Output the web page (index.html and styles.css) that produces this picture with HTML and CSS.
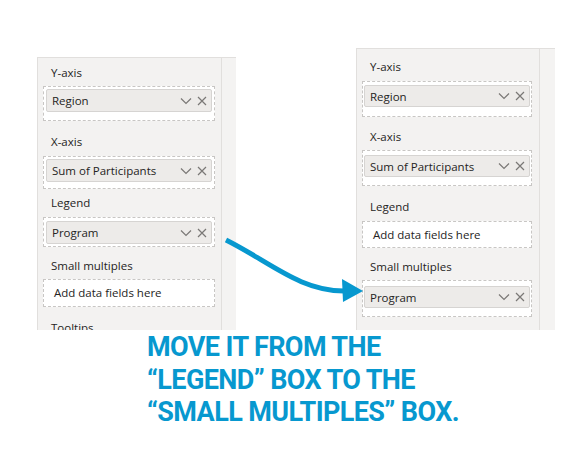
FILE: index.html
```html
<!DOCTYPE html>
<html>
	<head>
		<title>Move a field to Small multiples</title>
		<link rel="stylesheet" href="styles.css">
	</head>
	<body>
		<div class="stage">
			<div class="panes">
				<!-- before: Program sits in Legend -->
				<section class="pane pane-before">
					<div class="fields">
						<div class="label">Y-axis</div>
						<div class="well well-y">
							<div class="pill">
								<span class="pill-name">Region</span>
								<svg class="chev" width="12" height="8" viewBox="0 0 12 8"><path d="M1 1.5L6 6.5L11 1.5"/></svg>
								<svg class="cross" width="10" height="10" viewBox="0 0 10 10"><path d="M1 1L9 9M9 1L1 9"/></svg>
							</div>
						</div>
						<div class="label label-x">X-axis</div>
						<div class="well well-x">
							<div class="pill">
								<span class="pill-name">Sum of Participants</span>
								<svg class="chev" width="12" height="8" viewBox="0 0 12 8"><path d="M1 1.5L6 6.5L11 1.5"/></svg>
								<svg class="cross" width="10" height="10" viewBox="0 0 10 10"><path d="M1 1L9 9M9 1L1 9"/></svg>
							</div>
						</div>
						<div class="label label-legend">Legend</div>
						<div class="well well-legend">
							<div class="pill">
								<span class="pill-name">Program</span>
								<svg class="chev" width="12" height="8" viewBox="0 0 12 8"><path d="M1 1.5L6 6.5L11 1.5"/></svg>
								<svg class="cross" width="10" height="10" viewBox="0 0 10 10"><path d="M1 1L9 9M9 1L1 9"/></svg>
							</div>
						</div>
						<div class="label label-small">Small multiples</div>
						<div class="well well-empty">Add data fields here</div>
						<div class="label label-tips">Tooltips</div>
					</div>
					<div class="track"></div>
				</section>

				<!-- after: Program moved to Small multiples -->
				<section class="pane pane-after">
					<div class="fields">
						<div class="label">Y-axis</div>
						<div class="well well-y">
							<div class="pill">
								<span class="pill-name">Region</span>
								<svg class="chev" width="12" height="8" viewBox="0 0 12 8"><path d="M1 1.5L6 6.5L11 1.5"/></svg>
								<svg class="cross" width="10" height="10" viewBox="0 0 10 10"><path d="M1 1L9 9M9 1L1 9"/></svg>
							</div>
						</div>
						<div class="label label-x">X-axis</div>
						<div class="well well-x">
							<div class="pill">
								<span class="pill-name">Sum of Participants</span>
								<svg class="chev" width="12" height="8" viewBox="0 0 12 8"><path d="M1 1.5L6 6.5L11 1.5"/></svg>
								<svg class="cross" width="10" height="10" viewBox="0 0 10 10"><path d="M1 1L9 9M9 1L1 9"/></svg>
							</div>
						</div>
						<div class="label label-legend">Legend</div>
						<div class="well well-empty">Add data fields here</div>
						<div class="label label-small">Small multiples</div>
						<div class="well well-small">
							<div class="pill">
								<span class="pill-name">Program</span>
								<svg class="chev" width="12" height="8" viewBox="0 0 12 8"><path d="M1 1.5L6 6.5L11 1.5"/></svg>
								<svg class="cross" width="10" height="10" viewBox="0 0 10 10"><path d="M1 1L9 9M9 1L1 9"/></svg>
							</div>
						</div>
					</div>
					<div class="track"></div>
				</section>
			</div>

			<p class="note">MOVE IT FROM THE<br>“LEGEND” BOX TO THE<br>“SMALL MULTIPLES” BOX.</p>

			<svg class="arrow" width="588" height="455" viewBox="0 0 588 455">
				<path d="M226 240C270 262 300 291 344 291" fill="none" stroke="#0798cf" stroke-width="5"/>
				<polygon points="342,279 363,291 343,302" fill="#0798cf"/>
			</svg>
		</div>
	</body>
</html>
```

FILE: styles.css
```css
body{
	margin: 0;
	background: #fff;
}
.stage{
	position: relative;
	width: 588px;
	height: 455px;
	overflow: hidden;
	font-family: "Open Sans", "Noto Sans", sans-serif;
	color: #252423;
}
.panes{
	display: flex;
	align-items: flex-end;
	gap: 120px;
	padding: 48px 0 0 37px;
}
.pane{
	display: flex;
	box-sizing: border-box;
	width: 199px;
	border-top: 1px solid #e1dfdd;
	border-left: 1px solid #e1dfdd;
	background: #f3f2f1;
	overflow: hidden;
}
.pane-before{
	height: 273px;
}
.pane-after{
	height: 282px;
}
.fields{
	box-sizing: border-box;
	border-right: 1px solid #e1dfdd;
}
.pane-before .fields{
	width: 184px;
	padding: 7px 6px 0 5px;
}
.pane-after .fields{
	width: 183px;
	padding: 10px 7px 0 5px;
}
.track{
	flex: 1;
	background: #f4f3f2;
}

.label{
	height: 16px;
	line-height: 16px;
	padding-left: 8px;
	font-size: 11.5px;
	margin-bottom: 5px;
	white-space: nowrap;
}
.well{
	box-sizing: border-box;
	border: 1px dashed #c8c6c4;
	background: #fff;
	padding: 2px 2px 8px;
}
.pill{
	display: flex;
	align-items: center;
	box-sizing: border-box;
	height: 23px;
	padding: 0 4px 0 5px;
	background: #edebe9;
	border: 1px solid #d6d4d2;
	border-radius: 2px;
	font-size: 11.5px;
	white-space: nowrap;
}
.pill-name{
	flex: 1;
}
.chev, .cross{
	fill: none;
	stroke: #7a7876;
	stroke-width: 1.2;
}
.chev{
	margin-right: 5px;
}
.well-empty{
	height: 28px;
	padding: 0 0 0 10px;
	line-height: 26px;
	font-size: 11.5px;
}

/* per-bucket spacing of the "before" pane */
.pane-before .label-x{ margin-top: 13px; margin-bottom: 6px; }
.pane-before .well-x{ padding-bottom: 6px; }
.pane-before .label-legend{ margin-top: 6px; margin-bottom: 6px; }
.pane-before .well-legend{ padding: 3px 2px 2px; }
.pane-before .label-small{ margin-top: 11px; }
.pane-before .label-tips{ margin-top: 13px; }

/* "after" pane */
.pane-after .label{ margin-bottom: 6px; }
.pane-after .well{ padding-left: 1px; padding-right: 1px; }
.pane-after .pill{ height: 22px; }
.pane-after .well-y{ padding-top: 3px; padding-bottom: 9px; }
.pane-after .label-x{ margin-top: 12px; margin-bottom: 5px; }
.pane-after .well-x{ padding-top: 4px; padding-bottom: 8px; }
.pane-after .label-legend{ margin-top: 13px; }
.pane-after .well-empty{ height: 27px; line-height: 25px; padding-left: 10px; }
.pane-after .label-small{ margin-top: 11px; margin-bottom: 5px; }
.pane-after .well-small{ padding-top: 5px; padding-bottom: 8px; }

.note{
	margin: 1px 0 0 147px;
	font-family: Roboto, "Liberation Sans", sans-serif;
	font-weight: 700;
	font-size: 27px;
	line-height: 32.5px;
	letter-spacing: -0.6px;
	color: #0798cf;
}
.arrow{
	position: absolute;
	left: 0;
	top: 0;
	pointer-events: none;
}
```
